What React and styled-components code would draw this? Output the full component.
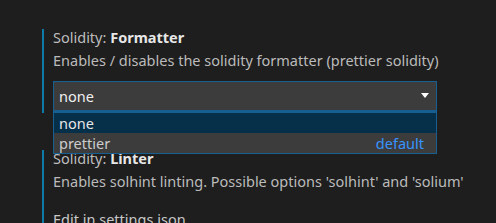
import React from "react";
import styled, { createGlobalStyle } from "styled-components";

const Global = createGlobalStyle`
  html, body { margin: 0; padding: 0; background: #1e1e1e; }
  body { font-family: "Noto Sans", "Segoe UI", sans-serif; font-size: 14.5px; }
`;

const Page = styled.div`
  width: 496px;
  height: 223px;
  overflow: hidden;
  box-sizing: border-box;
  padding: 29px 0 0 42px;
  display: flex;
  flex-direction: column;
  gap: 37px;
`;

const Item = styled.div`
  position: relative;
  border-left: 2px solid #0e7aa8;
  padding: 0 0 2px 9px;
  display: flex;
  flex-direction: column;
  z-index: ${p => (p.$top ? 2 : 1)};
`;

const Title = styled.div`
  line-height: 16px;
  color: #bdbdbd;
  white-space: nowrap;
`;

const Name = styled.span`
  font-weight: 700;
  color: #e7e7e7;
`;

const Description = styled.div`
  margin-top: 5px;
  line-height: 20px;
  color: #bbbbbb;
  white-space: nowrap;
`;

const SelectWrap = styled.div`
  position: relative;
  margin-top: 11px;
  width: 384px;
`;

const SelectBox = styled.div`
  box-sizing: border-box;
  height: 30px;
  border: 1px solid #175f91;
  background: #3c3c3c;
  color: #f0f0f0;
  display: flex;
  align-items: center;
  justify-content: space-between;
  padding: 0 7px 0 5px;
  line-height: 28px;
`;

const Arrow = styled.span`
  width: 0;
  height: 0;
  border-left: 4px solid transparent;
  border-right: 4px solid transparent;
  border-top: 5px solid #ffffff;
  margin-top: -2px;
`;

const List = styled.div`
  position: absolute;
  left: 0;
  right: 0;
  top: 30px;
  box-sizing: border-box;
  border: 1px solid #175f91;
  border-top-width: 2px;
  background: #3c3c3c;
  display: flex;
  flex-direction: column;
`;

const Option = styled.div`
  height: 20px;
  line-height: 21px;
  padding: 0 12px 0 5px;
  display: flex;
  justify-content: space-between;
  background: ${p => (p.$selected ? "#062f4a" : "#3c3c3c")};
  color: ${p => (p.$selected ? "#e6e6e6" : "#cccccc")};
`;

const Hint = styled.span`
  color: #3794ff;
`;

const Link = styled.div`
  margin-top: 18px;
  line-height: 20px;
  color: #c8c8c8;
  white-space: nowrap;
`;

export default function App() {
  return (
    <>
      <Global />
      <Page>
        <Item $top>
          <Title>
            Solidity: <Name>Formatter</Name>
          </Title>
          <Description>
            Enables / disables the solidity formatter (prettier solidity)
          </Description>
          <SelectWrap>
            <SelectBox>
              <span>none</span>
              <Arrow />
            </SelectBox>
            <List>
              <Option $selected>
                <span>none</span>
              </Option>
              <Option>
                <span>prettier</span>
                <Hint>default</Hint>
              </Option>
            </List>
          </SelectWrap>
        </Item>
        <Item>
          <Title>
            Solidity: <Name>Linter</Name>
          </Title>
          <Description>
            Enables solhint linting. Possible options 'solhint' and 'solium'
          </Description>
          <Link>Edit in settings.json</Link>
        </Item>
      </Page>
    </>
  );
}
